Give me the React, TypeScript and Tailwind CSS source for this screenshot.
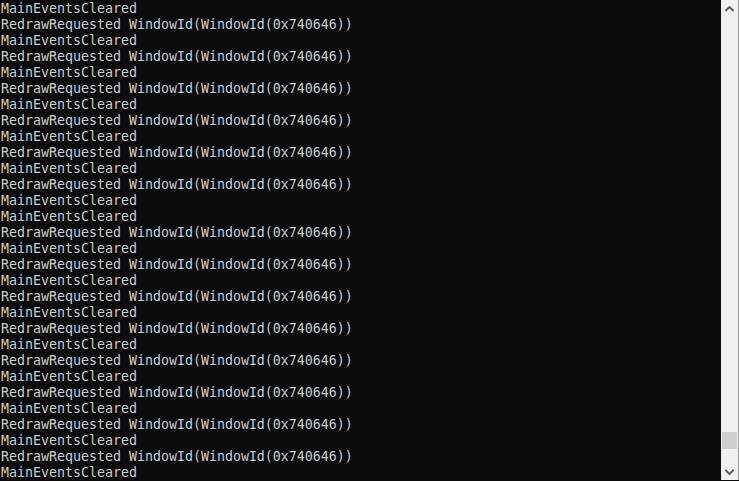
const lines = [
  "M", "R", "M", "R", "M", "R", "M", "R", "M", "R", "M", "R", "M", "M", "R",
  "M", "R", "M", "R", "M", "R", "M", "R", "M", "R", "M", "R", "M", "R", "M",
];

const Chevron = ({ up }: { up?: boolean }) => (
  <svg width="9" height="6" viewBox="0 0 9 6" className="block">
    <path
      d={up ? "M0.5 5 L4.5 1 L8.5 5" : "M0.5 1 L4.5 5 L8.5 1"}
      fill="none"
      stroke="#606060"
      strokeWidth="2"
    />
  </svg>
);

export default function App() {
  return (
    <div className="flex h-[481px] w-[739px] overflow-hidden bg-[#0c0c0c]">
      {/* console output */}
      <div
        className="flex-1 overflow-hidden pl-[1px] pt-[1px] text-[13.29px] leading-4 text-[#cccccc] whitespace-pre"
        style={{ fontFamily: '"DejaVu Sans Mono", "Liberation Mono", monospace' }}
      >
        {lines.map((l, i) => (
          <div key={i} className="h-4">
            {l === "M"
              ? "MainEventsCleared"
              : "RedrawRequested WindowId(WindowId(0x740646))"}
          </div>
        ))}
      </div>

      {/* scrollbar */}
      <div className="flex h-[480px] w-[18px] flex-col border-r border-[#a0a0a0] bg-[#f0f0f0]">
        <div className="flex h-[17px] items-center justify-center">
          <Chevron up />
        </div>
        <div className="flex flex-1 flex-col justify-end px-[1px] pb-[14px]">
          <div className="h-[17px] bg-[#cdcdcd]" />
        </div>
        <div className="flex h-[17px] items-center justify-center">
          <Chevron />
        </div>
      </div>
    </div>
  );
}
